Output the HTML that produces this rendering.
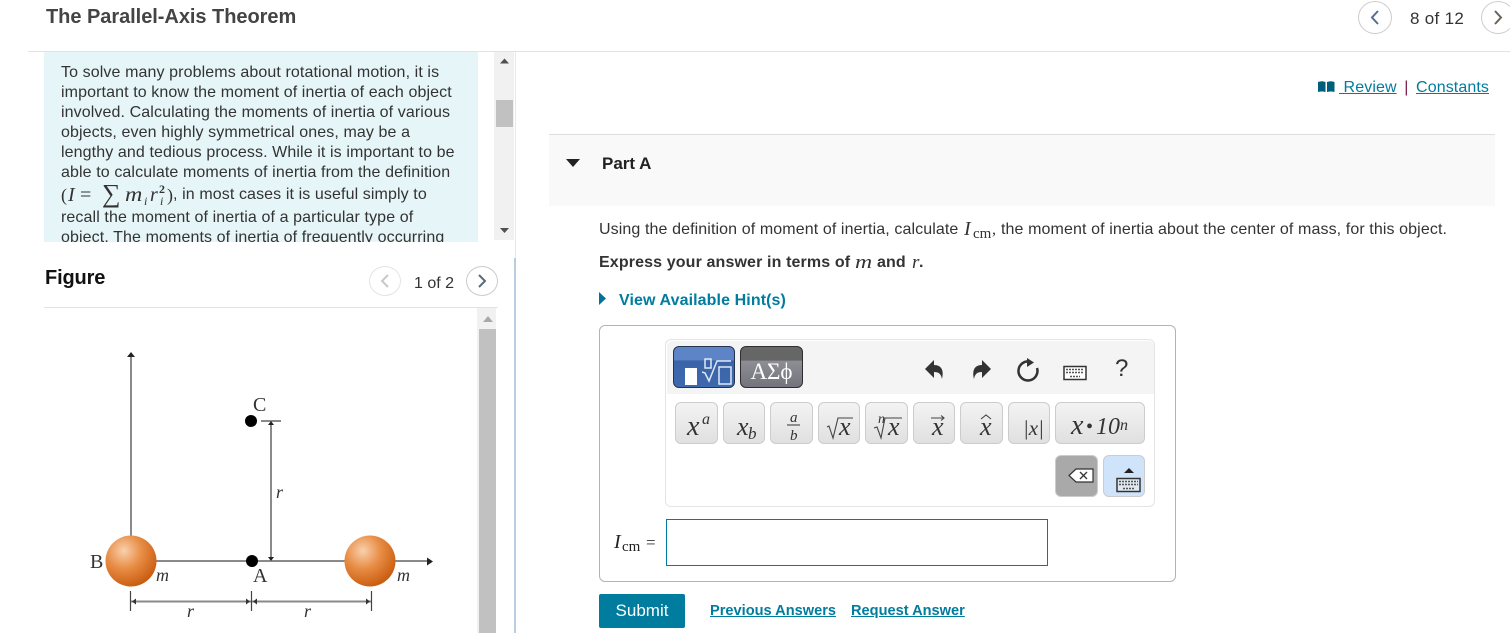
<!DOCTYPE html>
<html><head><meta charset="utf-8"><style>
html,body{margin:0;padding:0;background:#fff}
#p{position:relative;width:1510px;height:633px;overflow:hidden;font-family:"Liberation Sans",sans-serif;font-size:16px;color:#333}
.a{position:absolute;white-space:nowrap}
.t{letter-spacing:.105px}
.s{font-family:"Liberation Serif",serif}
.i{font-family:"Liberation Serif",serif;font-style:italic}
a,.l{color:#007c9e;text-decoration:underline}
.c{position:absolute;border-radius:50%;border:1.5px solid #ccc;box-sizing:border-box;background:#fff}
.b{position:absolute;box-sizing:border-box;border:1px solid #ccc;border-radius:6px;background:linear-gradient(#f3f3f3,#e0e0e0);top:402px;height:42px}
</style></head><body><div id="p">

<div class="a" style="left:46px;top:5px;font-size:20px;line-height:24px;font-weight:bold;color:#444;letter-spacing:-.04px">The Parallel-Axis Theorem</div>
<div class="c" style="left:1358px;top:1px;width:34px;height:33px"></div>
<svg class="a" style="left:1358px;top:1px" width="34" height="33"><path d="M20 10l-6 6.500 6 6.500" fill="none" stroke="#54708a" stroke-width="2"/></svg>
<div class="a" style="left:1410px;top:9px;line-height:20px;font-size:17px;letter-spacing:.3px">8 of 12</div>
<div class="c" style="left:1481px;top:1px;width:34px;height:33px"></div>
<svg class="a" style="left:1481px;top:1px" width="29" height="33"><path d="M14 10l6 6.500-6 6.500" fill="none" stroke="#6b6259" stroke-width="2"/></svg>
<div class="a" style="left:28px;top:51px;width:1482px;height:1px;background:#e2e2e2"></div>

<!-- Intro panel -->
<div class="a" style="left:44px;top:52px;width:434px;height:190px;background:#e6f5f7;overflow:hidden">
<div class="a t" style="left:17px;top:9px;line-height:20px;padding-top:2px">To solve many problems about rotational motion, it is<br>important to know the moment of inertia of each object<br>involved. Calculating the moments of inertia of various<br>objects, even highly symmetrical ones, may be a<br>lengthy and tedious process. While it is important to be<br>able to calculate moments of inertia from the definition</div>
<div class="a s" style="left:17px;top:133px;line-height:20px;font-size:18px">(</div>
<div class="a i" style="left:24px;top:133px;line-height:20px;font-size:20px">I</div>
<div class="a s" style="left:36px;top:133px;line-height:20px;font-size:20px">=</div>
<div class="a s" style="left:58px;top:132px;line-height:20px;font-size:26px">∑</div>
<div class="a i" style="left:81px;top:133px;line-height:20px;font-size:20px;transform:scaleX(1.2);transform-origin:left">m</div>
<div class="a i" style="left:100px;top:139px;line-height:20px;font-size:12px">i</div>
<div class="a i" style="left:106px;top:133px;line-height:20px;font-size:20px">r</div>
<div class="a s" style="left:115px;top:127px;line-height:20px;font-size:12px;font-weight:bold">2</div>
<div class="a i" style="left:116px;top:139px;line-height:20px;font-size:12px">i</div>
<div class="a s" style="left:123px;top:133px;line-height:20px;font-size:18px">)</div>
<div class="a t" style="left:129px;top:133px;line-height:20px">, in most cases it is useful simply to</div>
<div class="a t" style="left:17px;top:156px;line-height:20px">recall the moment of inertia of a particular type of<br>object. The moments of inertia of frequently occurring</div>
</div>
<div class="a" style="left:494px;top:52px;width:20px;height:188px;background:#f1f1f1"></div>
<div class="a" style="left:496px;top:100px;width:17px;height:27px;background:#c1c1c1"></div>
<svg class="a" style="left:494px;top:52px" width="20" height="188"><path d="M6 11.500h9l-4.500-5zM6 176h9l-4.500 5z" fill="#505050"/></svg>
<div class="a" style="left:515px;top:52px;width:1px;height:206px;background:#e8e8e8"></div>
<div class="a" style="left:514px;top:258px;width:2px;height:375px;background:#b9cde0"></div>

<!-- Figure header -->
<div class="a" style="left:45px;top:266px;font-size:20px;line-height:24px;font-weight:bold;color:#111;letter-spacing:-.15px">Figure</div>
<div class="c" style="left:369px;top:266px;width:32px;height:30px;border-color:#e4e4e4"></div>
<svg class="a" style="left:369px;top:266px" width="32" height="30"><path d="M19 9l-6 6 6 6" fill="none" stroke="#c8c8c8" stroke-width="2"/></svg>
<div class="a" style="left:414px;top:274px;line-height:20px">1 of 2</div>
<div class="c" style="left:466px;top:266px;width:32px;height:30px"></div>
<svg class="a" style="left:466px;top:266px" width="32" height="30"><path d="M13 9l6 6-6 6" fill="none" stroke="#5c6a78" stroke-width="2"/></svg>
<div class="a" style="left:44px;top:307px;width:454px;height:1px;background:#e2e2e2"></div>

<div class="a" style="left:477px;top:308px;width:19px;height:325px;background:#f1f1f1"></div>
<div class="a" style="left:479px;top:329px;width:17px;height:304px;background:#c1c1c1"></div>
<svg class="a" style="left:477px;top:308px" width="19" height="20"><path d="M6 14h10l-5-6z" fill="#a9a9a9"/></svg>

<!-- Diagram -->
<svg class="a" style="left:40px;top:340px" width="440" height="293">
<defs><radialGradient id="g" cx=".36" cy=".3" r=".78"><stop offset="0" stop-color="#f9d0ae"/><stop offset=".45" stop-color="#e88d45"/><stop offset="1" stop-color="#c45508"/></radialGradient></defs>
<g stroke="#8a8a8a" stroke-width="2" fill="none">
<path d="M91 16V200"/><path d="M91 221H388"/>
<path d="M231 83V219"/>
<path d="M91 261.500H331"/>
</g>
<path d="M91 12l-4 5h8zM393 221.500l-6-4v8zM231 81l-3 4h6zM231 221l-3-4h6z" fill="#222"/>
<path d="M221 81h20M90.500 251v20M211.500 251v20M331.500 251v20" stroke="#444" stroke-width="1.200" fill="none"/>
<path d="M92 261.500l4-3v6zM210 261.500l-4-3v6zM213 261.500l4-3v6zM330 261.500l-4-3v6z" fill="#333"/>
<circle cx="211" cy="81" r="6" fill="#000"/><circle cx="212" cy="221" r="6" fill="#000"/>
<circle cx="91" cy="221" r="25.500" fill="url(#g)"/><circle cx="330" cy="221" r="25.500" fill="url(#g)"/>
<g font-family="Liberation Serif,serif" fill="#333" font-size="20">
<text x="213" y="71">C</text><text x="213" y="242">A</text><text x="50" y="228">B</text>
<g font-style="italic" font-size="18"><text x="116" y="241">m</text><text x="357" y="241">m</text><text x="236" y="158">r</text><text x="147" y="277">r</text><text x="264" y="277">r</text></g>
</g></svg>

<!-- Right column -->
<svg class="a" style="left:1318px;top:81px" width="18" height="12"><path d="M0 1q4-1.500 7.500 0V11Q4 10 0 11zM9 1q4-1.500 7.500 0V11Q13 10 9 11z" fill="#005e7d"/></svg>
<div class="a t" style="left:1339px;top:78px;line-height:20px"><a>&nbsp;Review</a> <span style="color:#7a2048;margin:0 3px"> | </span> <a>Constants</a></div>

<div class="a" style="left:549px;top:134px;width:946px;height:72px;background:#f9f9f9;border-top:1px solid #dedede;box-sizing:border-box"></div>
<svg class="a" style="left:566px;top:159px" width="15" height="9"><path d="M0 0h14l-7 8z" fill="#222"/></svg>
<div class="a" style="left:602px;top:154px;line-height:20px;font-weight:bold;color:#222;font-size:17px">Part A</div>

<div class="a t" style="left:599px;top:220px;line-height:20px">Using the definition of moment of inertia, calculate</div>
<div class="a i" style="left:964px;top:219px;line-height:20px;font-size:20px">I</div>
<div class="a s" style="left:973px;top:224px;line-height:20px;font-size:15px">cm</div>
<div class="a s" style="left:992px;top:220px;line-height:20px;font-size:16px">,</div>
<div class="a t" style="left:1001px;top:220px;line-height:20px">the moment of inertia about the center of mass, for this object.</div>

<div class="a" style="left:599px;top:253px;line-height:20px;font-weight:bold;letter-spacing:.13px">Express your answer in terms of</div>
<div class="a i" style="left:855px;top:253px;line-height:20px;font-size:19px;transform:scaleX(1.25);transform-origin:left">m</div>
<div class="a" style="left:877px;top:253px;line-height:20px;font-weight:bold;letter-spacing:.13px">and</div>
<div class="a i" style="left:912px;top:253px;line-height:20px;font-size:19px">r</div>
<div class="a" style="left:919px;top:253px;line-height:20px;font-weight:bold">.</div>

<svg class="a" style="left:599px;top:292px" width="9" height="14"><path d="M0 0l7 6.500-7 6.500z" fill="#00739a"/></svg>
<div class="a" style="left:619px;top:291px;line-height:20px;font-weight:bold;color:#007c9e;letter-spacing:.1px">View Available Hint(s)</div>

<!-- Answer box -->
<div class="a" style="left:599px;top:325px;width:577px;height:257px;border:1px solid #b3b3b3;border-radius:6px;box-sizing:border-box"></div>
<div class="a" style="left:665px;top:339px;width:490px;height:168px;border:1.500px solid #e4e4e4;border-radius:6px;box-sizing:border-box;background:#fff"></div>
<div class="a" style="left:667px;top:341px;width:487px;height:53px;background:#f4f4f4;border-radius:5px 5px 0 0"></div>

<div class="a" style="left:673px;top:346px;width:62px;height:42px;border:1px solid #24344f;border-radius:6px;box-sizing:border-box;background:linear-gradient(#5c84c6 0,#5c84c6 33%,#3a63a8 34%,#3f69ae 100%)"></div>
<svg class="a" style="left:673px;top:346px" width="62" height="42"><rect x="12" y="22" width="12" height="17" fill="#fff"/><g fill="none" stroke="#dfe8f5" stroke-width="1.500"><rect x="32" y="13" width="6" height="9"/><rect x="46" y="21" width="12" height="17"/><path d="M29 26l3 1 4 8 8-20h14"/></g></svg>
<div class="a" style="left:740px;top:346px;width:63px;height:42px;border:1px solid #2e2e2e;border-radius:6px;box-sizing:border-box;background:linear-gradient(#666 0,#666 33%,#8e8e96 35%,#74747c 100%);color:#fff;text-align:center;font-family:'Liberation Serif',serif;font-size:23px;line-height:50px">ΑΣϕ</div>

<svg class="a" style="left:920px;top:350px" width="220" height="40">
<g fill="#333"><path d="M5 19l9-9v5c8 0 10 6 8 14-1-5-3-7-8-7v6z"/><path d="M71 19l-9-9v5c-8 0-10 6-8 14 1-5 3-7 8-7v6z"/></g>
<path d="M110.500 11.800A9.500 9.500 0 1 0 117 18" fill="none" stroke="#333" stroke-width="2.500"/><path d="M107 8l7 4.500-7 4.500z" fill="#333"/>
<rect x="144" y="16.500" width="22" height="13" fill="#fff" stroke="#333" stroke-width="1.500"/><path d="M146 19.500h18M146 22.500h18M150 26.500h10" stroke="#555" stroke-width="1.500" stroke-dasharray="2 1"/>
</svg>
<div class="a" style="left:1115px;top:357px;font-size:24px;line-height:24px;color:#333">?</div>

<div class="b" style="left:675px;width:43px"></div>
<div class="b" style="left:723px;width:42px"></div>
<div class="b" style="left:770px;width:43px"></div>
<div class="b" style="left:818px;width:42px"></div>
<div class="b" style="left:865px;width:43px"></div>
<div class="b" style="left:913px;width:42px"></div>
<div class="b" style="left:960px;width:43px"></div>
<div class="b" style="left:1008px;width:42px"></div>
<div class="b" style="left:1055px;width:90px"></div>

<svg class="a" style="left:660px;top:400px" width="500" height="50">
<g font-family="Liberation Serif,serif" font-style="italic" fill="#333">
<text x="27" y="35" font-size="28">x</text><text x="42" y="24" font-size="16">a</text>
<text x="77" y="35" font-size="26">x</text><text x="88" y="39" font-size="17">b</text>
<text x="130" y="22" font-size="15">a</text><text x="130" y="40" font-size="15">b</text>
<text x="179" y="35" font-size="26">x</text>
<text x="218" y="23" font-size="14">n</text><text x="228" y="35" font-size="26">x</text>
<text x="272" y="35" font-size="26">x</text>
<text x="320" y="35" font-size="26">x</text>
<text x="363" y="35" font-size="21">|x|</text>
<text x="411" y="34" font-size="28">x</text><text x="436" y="34" font-size="24">10</text><text x="460" y="30" font-size="16">n</text>
<text x="426" y="33" font-size="20" font-style="normal">•</text>
</g>
<g fill="none" stroke="#444" stroke-width="1.100">
<path d="M127 25h13"/>
<path d="M167 27l2-1 4 12 5-20h15"/>
<path d="M214 28l3-1 4 11 4-20h17"/>
<path d="M271 18h13M281 15.500l3 2.500-3 2.500"/>
<path d="M321 19l5-4 5 4"/>
</g></svg>

<div class="a" style="left:1055px;top:455px;width:43px;height:42px;border:1px solid #ccc;border-radius:6px;box-sizing:border-box;background:#a9a9a9"></div>
<svg class="a" style="left:1055px;top:455px" width="43" height="42"><path d="M14 20.500l7-6.500h17v13H21z" fill="#fff" stroke="#333" stroke-width="1.200"/><path d="M25 17l7 7M32 17l-7 7" stroke="#333" stroke-width="1.300"/></svg>
<div class="a" style="left:1103px;top:455px;width:42px;height:42px;border:1px solid #ccc;border-radius:6px;box-sizing:border-box;background:#cfe4fb"></div>
<svg class="a" style="left:1103px;top:455px" width="42" height="42"><path d="M21 18l5-5 5 5z" fill="#222"/><rect x="14" y="23.500" width="23" height="13" fill="#dfe9f2" stroke="#333" stroke-width="1.500"/><path d="M16 26.500h19M16 29.500h19M20 33.500h11" stroke="#555" stroke-width="1.500" stroke-dasharray="2 1"/></svg>

<div class="a i" style="left:614px;top:532px;line-height:20px;color:#222;font-size:20px">I</div>
<div class="a s" style="left:622px;top:537px;line-height:20px;color:#222;font-size:15px">cm</div>
<div class="a s" style="left:646px;top:533px;line-height:20px;font-size:17px">=</div>
<div class="a" style="left:666px;top:519px;width:382px;height:47px;border:1px solid #007c9e;box-sizing:border-box;background:#fff"></div>

<div class="a" style="left:599px;top:594px;width:86px;height:34px;background:#007c9e;border-radius:2px;color:#fff;text-align:center;line-height:33px;font-size:17px">Submit</div>
<div class="a l" style="left:710px;top:601px;line-height:20px;font-size:14.600px;font-weight:bold">Previous Answers</div>
<div class="a l" style="left:851px;top:601px;line-height:20px;font-size:14.600px;font-weight:bold">Request Answer</div>

</div></body></html>
